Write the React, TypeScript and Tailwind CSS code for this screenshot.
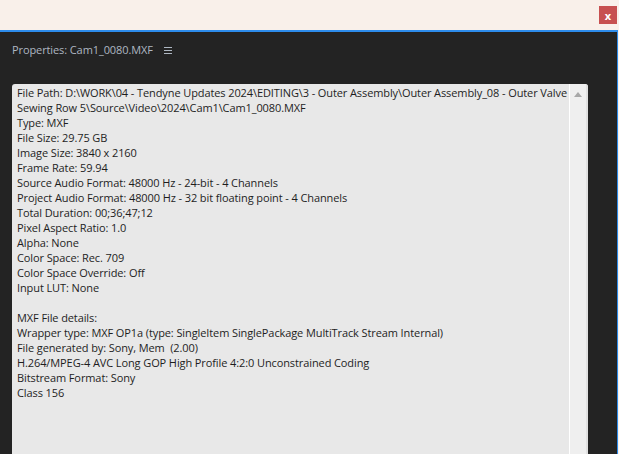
// Properties panel — Premiere-style media info
const lines = [
  "File Path: D:\\WORK\\04 - Tendyne Updates 2024\\EDITING\\3 - Outer Assembly\\Outer Assembly_08 - Outer Valve",
  "Sewing Row 5\\Source\\Video\\2024\\Cam1\\Cam1_0080.MXF",
  "Type: MXF",
  "File Size: 29.75 GB",
  "Image Size: 3840 x 2160",
  "Frame Rate: 59.94",
  "Source Audio Format: 48000 Hz - 24-bit - 4 Channels",
  "Project Audio Format: 48000 Hz - 32 bit floating point - 4 Channels",
  "Total Duration: 00;36;47;12",
  "Pixel Aspect Ratio: 1.0",
  "Alpha: None",
  "Color Space: Rec. 709",
  "Color Space Override: Off",
  "Input LUT: None",
  "",
  "MXF File details:",
  "Wrapper type: MXF OP1a (type: SingleItem SinglePackage MultiTrack Stream Internal)",
  "File generated by: Sony, Mem  (2.00)",
  "H.264/MPEG-4 AVC Long GOP High Profile 4:2:0 Unconstrained Coding",
  "Bitstream Format: Sony",
  "Class 156",
];

export default function App() {
  return (
    <div className="flex h-[454px] w-[619px] flex-col overflow-hidden bg-[#f9f0ea] font-['Open_Sans',sans-serif]">
      {/* Window strip */}
      <div className="flex h-[30px] shrink-0 items-start justify-end pt-[6px] pr-[2px]">
        <button className="flex h-[18px] w-[18px] items-center justify-center bg-[#c75050] text-[11px] leading-none font-bold text-white">
          x
        </button>
      </div>

      {/* Panel */}
      <div className="flex min-h-0 w-[618px] flex-1 flex-col border-t-2 border-r border-[#2d8ceb] bg-[#232323] pl-[12px]">
        <div className="flex h-[52px] shrink-0 items-center gap-[11px] pb-[16px] text-[11px] tracking-[-0.1px] text-[#aeb7c2]">
          <span>Properties: Cam1_0080.MXF</span>
          <span className="flex w-[8px] flex-col gap-[2px]">
            <span className="h-px bg-[#aeb7c2]" />
            <span className="h-px bg-[#aeb7c2]" />
            <span className="h-px bg-[#aeb7c2]" />
          </span>
        </div>

        <div className="flex min-h-0 w-[576px] flex-1 overflow-hidden rounded-t-[3px] bg-[#e8e8e8]">
          <div className="w-[557px] pt-[1px] pl-[5px] text-[11px] leading-[15px] tracking-[-0.1px] whitespace-pre text-[#1e1e1e]">
            {lines.map((l, i) => (
              <div key={i} className="h-[15px]">
                {l}
              </div>
            ))}
          </div>
          <div className="w-px bg-white" />
          <div className="flex flex-1 justify-center bg-[#efefef] pt-[8px]">
            <div className="h-0 w-0 border-x-[4px] border-b-[5px] border-x-transparent border-b-[#a8a8a8]" />
          </div>
          <div className="w-[2px] bg-[#e0e0e0]" />
        </div>
      </div>
    </div>
  );
}
